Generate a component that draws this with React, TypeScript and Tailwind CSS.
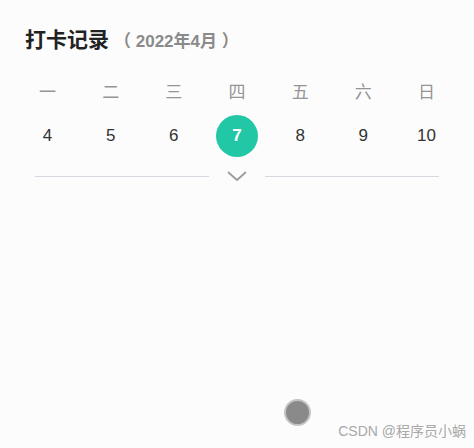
const weekdays = ['一', '二', '三', '四', '五', '六', '日'];
const days = [4, 5, 6, 7, 8, 9, 10];

export default function App() {
  return (
    <div
      className="relative w-[474px] h-[448px] bg-[#fcfcfd] overflow-hidden"
      style={{ fontFamily: '"Liberation Sans", "Noto Sans CJK SC", sans-serif' }}
    >
      {/* Header */}
      <div className="flex items-baseline pl-[25px] pt-[24px]">
        <span className="text-[21px] font-bold text-[#222]">打卡记录</span>
        <span className="ml-[5px] text-[17px] font-bold text-[#8a8a8a]">（ 2022年4月 ）</span>
      </div>

      {/* Weekday header */}
      <div className="grid grid-cols-7 px-[16px] mt-[26px]">
        {weekdays.map((w) => (
          <div key={w} className="h-[22px] flex items-center justify-center text-[17px] text-[#959595]">
            {w}
          </div>
        ))}
      </div>

      {/* Days */}
      <div className="grid grid-cols-7 px-[16px] mt-[11px]">
        {days.map((d) => (
          <div key={d} className="flex items-center justify-center h-[42px]">
            {d === 7 ? (
              <div className="w-[42px] h-[42px] rounded-full bg-[#22c8a6] flex items-center justify-center text-[17px] font-bold text-white">
                {d}
              </div>
            ) : (
              <span className="text-[17px] text-[#333]">{d}</span>
            )}
          </div>
        ))}
      </div>

      {/* Expand toggle */}
      <div className="flex items-center mx-[35px] mt-[12px] h-[16px]">
        <div className="flex-1 h-px bg-[#d6d8e0]" />
        <div className="w-[56px] flex justify-center">
          <svg width="20" height="11" viewBox="0 0 20 11" fill="none">
            <path d="M1.5 1.5l8.5 7.5 8.5-7.5" stroke="#9a9a9a" strokeWidth="1.7" strokeLinecap="round" strokeLinejoin="round" />
          </svg>
        </div>
        <div className="flex-1 h-px bg-[#d6d8e0]" />
      </div>

      {/* Floating dot */}
      <div className="absolute left-[284px] top-[399px] w-[27px] h-[27px] rounded-full bg-[#8a8a8a] border-2 border-[#c4c4c4]" />

      {/* Watermark */}
      <div className="absolute right-[8px] bottom-[6px] text-[14px] text-[#a8a8a8]">CSDN @程序员小蜗</div>
    </div>
  );
}
